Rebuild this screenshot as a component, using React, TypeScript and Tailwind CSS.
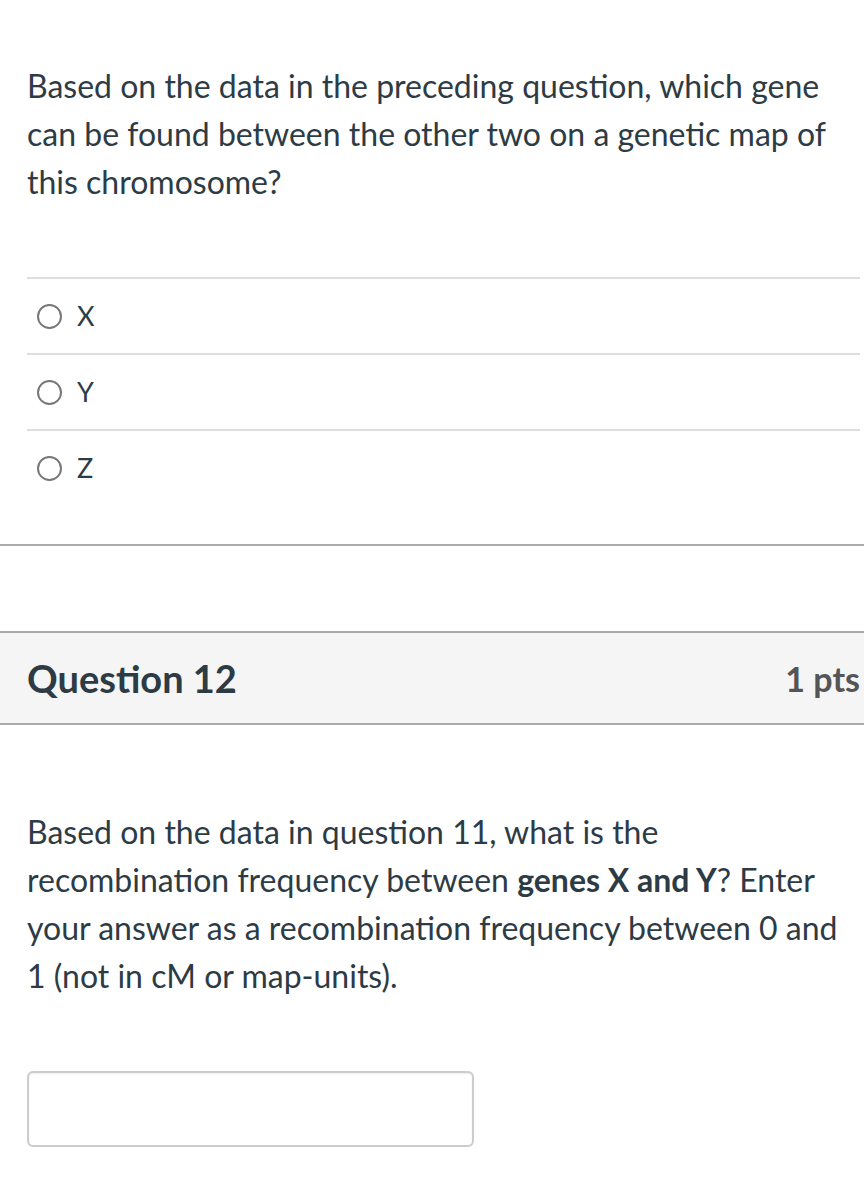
import React from 'react';

const font = { fontFamily: 'Lato, "Noto Sans", sans-serif' };

const answers = ['X', 'Y', 'Z'];

const Radio: React.FC = () => (
  <span className="inline-block w-[25px] h-[25px] rounded-full border-2 border-[#777] bg-white shrink-0" />
);

export default function App() {
  return (
    <div className="w-[864px] bg-white text-[#2d3b45]" style={font}>
      {/* Question 11 (tail) */}
      <div className="border-b-2 border-[#aaa]">
        <p className="pl-[27px] pr-[4px] pt-[62px] text-[32px] leading-[48px]">
          Based on the data in the preceding question, which gene can be found between the other two on a genetic map of this chromosome?
        </p>
        <div className="ml-[27px] mr-[4px] mt-[71px] mb-[39px]">
          {answers.map((a) => (
            <div
              key={a}
              className="flex items-center gap-[15px] pl-[10px] h-[76px] border-t-2 border-[#ddd]"
            >
              <Radio />
              <span className="text-[27px]">{a}</span>
            </div>
          ))}
        </div>
      </div>

      <div className="h-[85px]" />

      {/* Question 12 */}
      <div className="border-t-2 border-[#aaa]">
        <div className="flex items-center justify-between h-[92px] bg-[#f5f5f5] border-b-2 border-[#aaa] pl-[27px] pr-[4px]">
          <h2 className="text-[38px] font-bold text-[#2d3b45]">Question 12</h2>
          <span className="text-[34px] font-bold text-[#555]">1 pts</span>
        </div>
        <p className="pl-[27px] pr-[4px] pt-[83px] text-[32px] leading-[48px]">
          Based on the data in question 11, what is the recombination frequency between <b>genes X and Y</b>? Enter your answer as a recombination frequency between 0 and 1 (not in cM or map-units).
        </p>
        <div className="pl-[27px] pt-[71px] pb-[36px]">
          <input
            type="text"
            className="block w-[447px] h-[76px] rounded-[6px] border-2 border-[#ccc] bg-white shadow-[inset_0_1px_2px_rgba(0,0,0,0.08)] outline-none"
          />
        </div>
      </div>
    </div>
  );
}
